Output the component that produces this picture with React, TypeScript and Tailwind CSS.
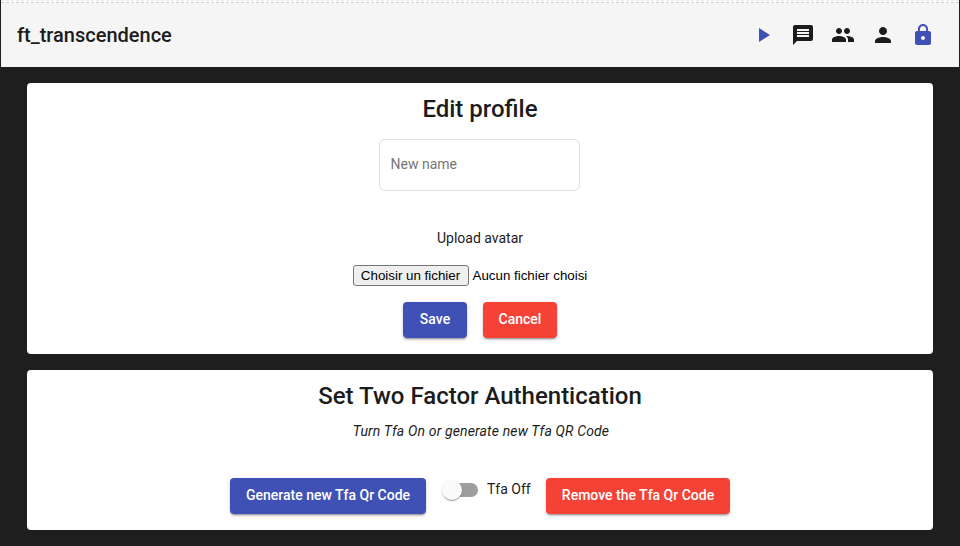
const navIcons = [
  { label: 'play', path: 'M8 5v14l11-7z', color: 'text-[#3f51b5]' },
  {
    label: 'chat',
    path: 'M20 2H4c-1.1 0-1.99.9-1.99 2L2 22l4-4h14c1.1 0 2-.9 2-2V4c0-1.1-.9-2-2-2zm-2 12H6v-2h12v2zm0-3H6V9h12v2zm0-3H6V6h12v2z',
    color: 'text-[#1c1c1c]',
  },
  {
    label: 'people',
    path: 'M16 11c1.66 0 2.99-1.34 2.99-3S17.66 5 16 5c-1.66 0-3 1.34-3 3s1.34 3 3 3zm-8 0c1.66 0 2.99-1.34 2.99-3S9.66 5 8 5C6.34 5 5 6.34 5 8s1.34 3 3 3zm0 2c-2.33 0-7 1.17-7 3.5V19h14v-2.5c0-2.33-4.67-3.5-7-3.5zm8 0c-.29 0-.62.02-.97.05 1.16.84 1.97 1.97 1.97 3.45V19h6v-2.5c0-2.33-4.67-3.5-7-3.5z',
    color: 'text-[#1c1c1c]',
  },
  {
    label: 'profile',
    path: 'M12 12c2.21 0 4-1.79 4-4s-1.79-4-4-4-4 1.79-4 4 1.79 4 4 4zm0 2c-2.67 0-8 1.34-8 4v2h16v-2c0-2.66-5.33-4-8-4z',
    color: 'text-[#1c1c1c]',
  },
  {
    label: 'lock',
    path: 'M18 8h-1V6c0-2.76-2.24-5-5-5S7 3.24 7 6v2H6c-1.1 0-2 .9-2 2v10c0 1.1.9 2 2 2h12c1.1 0 2-.9 2-2V10c0-1.1-.9-2-2-2zm-6 9c-1.1 0-2-.9-2-2s.9-2 2-2 2 .9 2 2-.9 2-2 2zm3.1-9H8.9V6c0-1.71 1.39-3.1 3.1-3.1 1.71 0 3.1 1.39 3.1 3.1v2z',
    color: 'text-[#3f51b5]',
  },
];

const raisedShadow = 'shadow-[0_3px_1px_-2px_rgba(0,0,0,0.2),0_2px_2px_0_rgba(0,0,0,0.14),0_1px_5px_0_rgba(0,0,0,0.12)]';

function Header() {
  return (
    <header className="flex h-[64px] items-center justify-between bg-[#f5f5f5] px-4">
      <h1 className="text-[20px] font-medium leading-8 text-[#1c1c1c]">ft_transcendence</h1>
      <nav className="flex">
        {navIcons.map((icon) => (
          <button key={icon.label} aria-label={icon.label} className={`p-2 ${icon.color}`}>
            <svg viewBox="0 0 24 24" fill="currentColor" className="h-6 w-6">
              <path d={icon.path} />
            </svg>
          </button>
        ))}
      </nav>
    </header>
  );
}

function EditProfile() {
  return (
    <section className="flex h-[271px] flex-col items-center rounded bg-white pt-2.5">
      <h2 className="text-2xl font-medium leading-8 text-[#1c1c1c]">Edit profile</h2>
      <input
        placeholder="New name"
        className="mt-3.5 -ml-0.5 h-[52px] w-[201px] rounded-md border border-[#dddddd] px-[11px] pb-0.5 text-sm text-[#1c1c1c] outline-none placeholder:text-[#757575]"
      />
      <p className="mt-[37px] text-sm leading-5 text-[#1c1c1c]">Upload avatar</p>
      <div className="mt-[17px] flex w-[255px] items-center font-['Liberation_Sans',sans-serif] text-[13.33px] text-black">
        <button className="h-[21px] w-[116px] rounded-[3px] border border-[#767676] bg-[#efefef]">
          Choisir un fichier
        </button>
        <span className="ml-1">Aucun fichier choisi</span>
      </div>
      <div className="mt-[16px] flex gap-4">
        <button className={`h-9 w-16 rounded bg-[#3f51b5] pb-0.5 text-sm font-medium text-white ${raisedShadow}`}>
          Save
        </button>
        <button className={`h-9 w-[74px] rounded bg-[#f44336] pb-0.5 text-sm font-medium text-white ${raisedShadow}`}>
          Cancel
        </button>
      </div>
    </section>
  );
}

function TwoFactor() {
  return (
    <section className="flex h-[160px] flex-col items-center rounded bg-white pt-2.5">
      <h2 className="text-2xl font-medium leading-8 text-[#1c1c1c]">Set Two Factor Authentication</h2>
      <p className="mt-[9px] ml-0.5 text-sm italic leading-5 tracking-[0.15px] text-[#1c1c1c]">
        Turn Tfa On or generate new Tfa QR Code
      </p>
      <div className="mt-[37px] flex items-start">
        <button className={`h-9 w-[196px] rounded bg-[#3f51b5] pb-0.5 text-sm font-medium text-white ${raisedShadow}`}>
          Generate new Tfa Qr Code
        </button>
        <div className="ml-4 flex h-6 w-[104px] items-center">
          <span className="relative ml-[3px] h-3.5 w-[33px] rounded-full bg-[#9e9e9e]">
            <span className="absolute -top-[3px] -left-[3px] h-5 w-5 rounded-full bg-[#fafafa] shadow-[0_2px_1px_-1px_rgba(0,0,0,0.2),0_1px_1px_0_rgba(0,0,0,0.14),0_1px_3px_0_rgba(0,0,0,0.12)]" />
          </span>
          <span className="ml-[9px] pb-0.5 text-sm text-[#1c1c1c]">Tfa Off</span>
        </div>
        <button className={`h-9 w-[184px] rounded bg-[#f44336] pb-0.5 text-sm font-medium text-white ${raisedShadow}`}>
          Remove the Tfa Qr Code
        </button>
      </div>
    </section>
  );
}

export default function App() {
  return (
    <div className="h-[546px] overflow-hidden bg-[#1e1e1e] px-px font-['Roboto',sans-serif]">
      <div className="h-[3px] border-t border-b border-dashed border-t-[#e8e8e8] border-b-[#d0d0d0] bg-white" />
      <Header />
      <main className="flex flex-col gap-4 px-[26px] pt-4">
        <EditProfile />
        <TwoFactor />
      </main>
    </div>
  );
}
